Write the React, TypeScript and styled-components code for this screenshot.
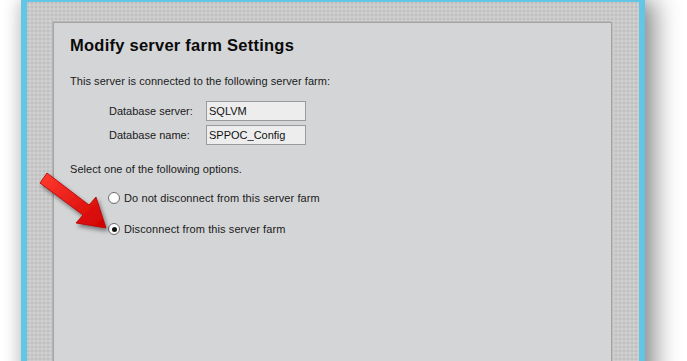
import React from 'react'
import styled, { createGlobalStyle } from 'styled-components'

const GlobalStyle = createGlobalStyle`
  html, body {
    margin: 0;
    padding: 0;
    background: #ffffff;
    overflow: hidden;
  }
  body {
    font-family: 'Liberation Sans', Arial, sans-serif;
  }
`

const Page = styled.div`
  position: relative;
  width: 687px;
  height: 361px;
  overflow: hidden;
  padding-left: 21px;
  box-sizing: border-box;
`

const Window = styled.div`
  width: 624px;
  height: 420px;
  box-sizing: border-box;
  border: 6px solid #62c6e6;
  border-top-width: 2px;
  border-bottom: none;
  padding: 20px 27px 0 26px;
  background-color: #cacaca;
  background-image: radial-gradient(circle at 1px 1px, #bfbfbf 0.8px, transparent 1.3px),
    radial-gradient(circle at 3px 3px, #d0d0d0 0.8px, transparent 1.3px);
  background-size: 4px 4px;
  box-shadow: 10px 0 24px rgba(0, 0, 0, 0.45), -4px 0 14px rgba(0, 0, 0, 0.1);
`

const Panel = styled.div`
  height: 100%;
  box-sizing: border-box;
  background: #d4d5d7;
  border: 1px solid #a3a3a3;
  box-shadow: -1px -1px 0 #b8b8b8, 1px 0 0 #bdbdbd;
  padding: 12px 16px 0 16px;
  color: #111;
`

const Title = styled.h1`
  margin: 0;
  font-size: 16.5px;
  line-height: 20px;
  font-weight: bold;
  letter-spacing: 0.25px;
  color: #0a0a0a;
`

const Text = styled.p<{ $top: number }>`
  margin: ${p => p.$top}px 0 0 0;
  font-size: 11px;
  line-height: 14px;
  letter-spacing: 0.05px;
  color: #1a1a1a;
`

const Fields = styled.div`
  display: grid;
  grid-template-columns: 97px 100px;
  row-gap: 4px;
  margin: 13px 0 0 39px;
  align-items: center;
`

const Label = styled.span`
  font-size: 11px;
  letter-spacing: 0;
  color: #1a1a1a;
`

const Input = styled.div`
  height: 20px;
  box-sizing: border-box;
  border: 1px solid #9a9a9a;
  background: #ededed;
  font-size: 11px;
  line-height: 18px;
  padding-left: 2px;
  color: #111;
`

const Options = styled.div`
  display: flex;
  flex-direction: column;
  gap: 17px;
  margin: 15px 0 0 38px;
`

const Option = styled.label`
  display: flex;
  align-items: center;
  gap: 4px;
  font-size: 11px;
  line-height: 14px;
  letter-spacing: 0.1px;
  color: #1a1a1a;
`

const Radio = styled.span<{ $checked?: boolean }>`
  width: 12px;
  height: 12px;
  box-sizing: border-box;
  border-radius: 50%;
  border: 1px solid #6f6f6f;
  background: radial-gradient(circle at 50% 40%, #ffffff 55%, #e2e2e2 100%);
  display: flex;
  align-items: center;
  justify-content: center;
  &::after {
    content: '';
    width: 5px;
    height: 5px;
    border-radius: 50%;
    background: ${p => (p.$checked ? '#111' : 'transparent')};
  }
`

const Arrow = styled.svg`
  position: absolute;
  left: 0;
  top: 0;
  pointer-events: none;
`

const App: React.FC = () => {
  return (
    <>
      <GlobalStyle />
      <Page>
        <Window>
          <Panel>
            <Title>Modify server farm Settings</Title>
            <Text $top={19}>This server is connected to the following server farm:</Text>
            <Fields>
              <Label>Database server:</Label>
              <Input>SQLVM</Input>
              <Label>Database name:</Label>
              <Input>SPPOC_Config</Input>
            </Fields>
            <Text $top={17}>Select one of the following options.</Text>
            <Options>
              <Option>
                <Radio />
                Do not disconnect from this server farm
              </Option>
              <Option>
                <Radio $checked />
                Disconnect from this server farm
              </Option>
            </Options>
          </Panel>
        </Window>
        <Arrow width="687" height="361" viewBox="0 0 687 361">
          <defs>
            <linearGradient id="arrowFill" x1="0" y1="0" x2="1" y2="1">
              <stop offset="0" stopColor="#ff3b30" />
              <stop offset="1" stopColor="#d00000" />
            </linearGradient>
            <filter id="arrowShadow" x="-20%" y="-20%" width="140%" height="140%">
              <feDropShadow dx="2" dy="3" stdDeviation="2" floodColor="#000" floodOpacity="0.45" />
            </filter>
          </defs>
          <path
            d="M40 183 L47 173 L89 205 L96 197 L106 228 L76 223 L83 215 Z"
            fill="url(#arrowFill)"
            stroke="#b00000"
            strokeWidth="0.8"
            strokeLinejoin="round"
            filter="url(#arrowShadow)"
          />
        </Arrow>
      </Page>
    </>
  )
}

export default App
